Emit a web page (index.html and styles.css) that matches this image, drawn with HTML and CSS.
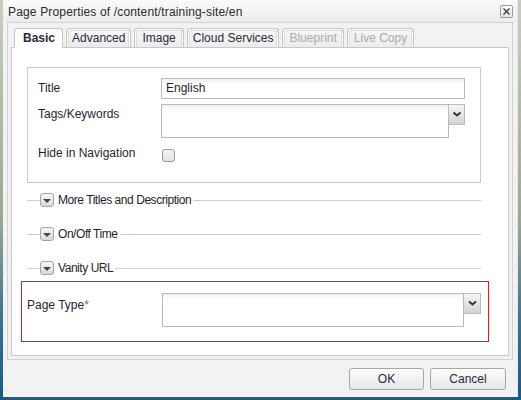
FILE: index.html
```html
<!DOCTYPE html>
<html>
<head>
<meta charset="utf-8">
<title>Page Properties</title>
<link rel="stylesheet" href="styles.css">
</head>
<body>
<div class="desk">
  <div class="dialog">
    <div class="titlebar">
      <span class="title">Page Properties of /content/training-site/en</span>
      <span class="close"><svg width="11" height="11" viewBox="0 0 11 11"><path d="M2.5 2.5 L8.5 8.5 M8.5 2.5 L2.5 8.5" stroke="#3a3a3a" stroke-width="1.3" fill="none"/></svg></span>
    </div>
    <div class="frame">
      <div class="tabs">
        <div class="tab active">Basic</div>
        <div class="tab">Advanced</div>
        <div class="tab roomy">Image</div>
        <div class="tab">Cloud Services</div>
        <div class="tab disabled">Blueprint</div>
        <div class="tab disabled">Live Copy</div>
      </div>
      <div class="panel">
        <div class="fieldset">
          <div class="row r1">
            <label class="lbl">Title</label>
            <div class="text">English</div>
          </div>
          <div class="row r2">
            <label class="lbl">Tags/Keywords</label>
            <div class="combo">
              <div class="box tags"></div>
              <div class="trigger"><svg width="14" height="19" viewBox="0 0 14 19"><path d="M3.5 7.5 L7 10.5 L10.5 7.5" stroke="#333" stroke-width="2" fill="none"/></svg></div>
            </div>
          </div>
          <div class="row r3">
            <label class="lbl">Hide in Navigation</label>
            <span class="checkbox"></span>
          </div>
        </div>
        <div class="section first">
          <span class="line lead"></span><span class="toggle"><span class="tri"></span></span><span class="stitle">More Titles and Description</span><span class="line fill"></span>
        </div>
        <div class="section">
          <span class="line lead"></span><span class="toggle"><span class="tri"></span></span><span class="stitle">On/Off Time</span><span class="line fill"></span>
        </div>
        <div class="section">
          <span class="line lead"></span><span class="toggle"><span class="tri"></span></span><span class="stitle">Vanity URL</span><span class="line fill"></span>
        </div>
        <div class="required">
          <label class="lbl req">Page Type<span class="star">*</span></label>
          <div class="combo">
            <div class="box type"></div>
            <div class="trigger wide"><svg width="15" height="19" viewBox="0 0 15 19"><path d="M4 7.5 L7.5 10.5 L11 7.5" stroke="#333" stroke-width="2" fill="none"/></svg></div>
          </div>
        </div>
      </div>
    </div>
    <div class="footer">
      <button class="btn ok">OK</button>
      <button class="btn">Cancel</button>
    </div>
  </div>
</div>
</body>
</html>
```
FILE: styles.css
```css
html, body {
  margin: 0;
  padding: 0;
}
body {
  width: 521px;
  height: 400px;
  overflow: hidden;
  background: linear-gradient(to bottom, #c8cdc0 0%, #9aa892 55%, #3a7390 80%, #175a86 100%);
  font-family: "Liberation Sans", Arial, sans-serif;
  font-size: 12px;
  color: #1f1f2e;
}
.desk {
  display: flex;
  padding-left: 3px;
  height: 400px;
  box-sizing: border-box;
}
.dialog {
  width: 515px;
  height: 397px;
  background: #f2f2f2;
  border-right: 1px solid #e6e6e6;
  box-sizing: border-box;
  display: flex;
  flex-direction: column;
}
.titlebar {
  height: 22px;
  display: flex;
  align-items: flex-start;
  padding: 0 4px 0 5px;
  background: linear-gradient(to bottom, #fbfbfb, #ececec);
  flex: none;
}
.title {
  padding-top: 2px;
  line-height: 20px;
  color: #2a2a2a;
  font-size: 12px;
  letter-spacing: 0.16px;
}
.close {
  margin-left: auto;
  margin-top: 5px;
  width: 13px;
  height: 13px;
  box-sizing: border-box;
  border: 1px solid #9a9a9a;
  border-radius: 2px;
  background: linear-gradient(to bottom, #ffffff, #e4e4e4);
  display: flex;
  align-items: center;
  justify-content: center;
}
.close svg { display: block; }
.frame {
  margin: 0 4px;
  border: 1px solid #d2d2d2;
  padding: 5px 3px 3px 3px;
  flex: none;
}
.tabs {
  display: flex;
  padding-left: 3px;
  height: 19px;
  position: relative;
  z-index: 1;
}
.tab {
  height: 19px;
  box-sizing: border-box;
  border: 1px solid #c6c6c6;
  border-bottom: none;
  border-radius: 3px 3px 0 0;
  box-shadow: inset 1px 1px 0 #ffffff, inset -1px 0 0 #ffffff, inset 2px 2px 0 #dcdcdc, inset -2px 0 0 #dcdcdc;
  background: linear-gradient(to bottom, #f7f7f7, #ececec);
  padding: 0 5px;
  margin-right: 3px;
  line-height: 18px;
  color: #2a2a3a;
}
.tab.roomy { padding: 0 7px; }
.tab.active {
  background: #ffffff;
  box-shadow: none;
  font-weight: bold;
  height: 20px;
  padding: 0 7px 0 8px;
}
.tab.disabled {
  color: #a9a9a9;
  padding: 0 6px;
}
.panel {
  height: 309px;
  box-sizing: border-box;
  border: 1px solid #c8c8c8;
  background: #ffffff;
  padding-top: 19px;
}
.fieldset {
  margin-left: 15px;
  width: 454px;
  box-sizing: border-box;
  border: 1px solid #cbcbcb;
  padding: 10px 15px 20px 10px;
}
.row {
  display: flex;
  align-items: flex-start;
}
.lbl {
  width: 123px;
  flex: none;
  line-height: 21px;
}
.r1 { height: 21px; margin-bottom: 5px; }
.r2 { height: 34px; margin-bottom: 11px; }
.r3 { height: 13px; }
.r3 .lbl { line-height: 13px; margin-top: -2px; }
.text {
  width: 304px;
  height: 21px;
  box-sizing: border-box;
  border: 1px solid #b8bac8;
  background: linear-gradient(to bottom, #eef0f2 0px, #ffffff 5px);
  padding-left: 4px;
  line-height: 19px;
  color: #1f1f2e;
}
.combo {
  display: flex;
  align-items: flex-start;
}
.box {
  height: 34px;
  box-sizing: border-box;
  border: 1px solid #b8bac8;
  background: linear-gradient(to bottom, #eef0f2 0px, #ffffff 5px);
}
.box.tags { width: 288px; }
.box.type { width: 302px; }
.trigger {
  width: 16px;
  height: 21px;
  box-sizing: border-box;
  border: 1px solid #b8bac8;
  border-left: none;
  background: linear-gradient(to bottom, #f6f6f6, #d3d3d3);
  display: flex;
  align-items: center;
  justify-content: center;
}
.trigger.wide { width: 17px; }
.trigger svg { display: block; }
.checkbox {
  display: block;
  width: 13px;
  height: 13px;
  margin-left: 1px;
  box-sizing: border-box;
  border: 1px solid #9a9a9a;
  border-radius: 3px;
  background: linear-gradient(to bottom, #f4f4f4, #e2e2e2);
}
.section {
  margin-left: 15px;
  width: 454px;
  height: 14px;
  display: flex;
  align-items: center;
  margin-top: 20px;
}
.section.first { margin-top: 10px; }
.line {
  height: 1px;
  background: #cfcfcf;
}
.line.lead { width: 13px; flex: none; }
.line.fill { flex: 1; margin-left: 2px; }
.toggle {
  width: 14px;
  height: 14px;
  box-sizing: border-box;
  border: 1px solid #a4a4a4;
  border-radius: 3px;
  background: linear-gradient(to bottom, #f8f8f8, #d9d9d9);
  display: flex;
  align-items: center;
  justify-content: center;
  flex: none;
}
.tri {
  width: 0;
  height: 0;
  border-left: 4px solid transparent;
  border-right: 4px solid transparent;
  border-top: 4px solid #444;
  margin-top: 1px;
}
.stitle {
  margin-left: 4px;
  line-height: 14px;
  white-space: nowrap;
  letter-spacing: -0.45px;
}
.required {
  margin: 6px 0 0 9px;
  width: 468px;
  box-sizing: border-box;
  border: 1px solid #e8141e;
  padding: 11px 8px 14px 5px;
  display: flex;
  align-items: flex-start;
}
.lbl.req {
  width: 135px;
  padding-top: 2px;
}
.star { color: #6a6a7a; }
.footer {
  display: flex;
  justify-content: flex-end;
  gap: 6px;
  padding: 8px 11px 0 0;
}
.btn {
  height: 22px;
  box-sizing: border-box;
  border: 1px solid #a6a6a6;
  border-radius: 3px;
  background: linear-gradient(to bottom, #fdfdfd, #e6e6e6);
  font-family: "Liberation Sans", Arial, sans-serif;
  font-size: 12px;
  color: #1f2a3a;
  width: 76px;
  padding: 0;
}
.btn.ok { width: 75px; }
```
